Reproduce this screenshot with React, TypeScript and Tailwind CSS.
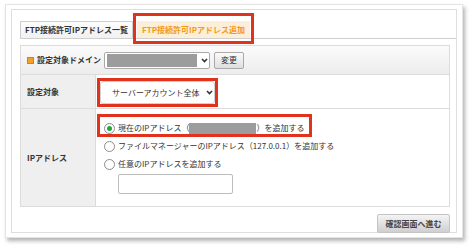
// FTP接続許可IPアドレス追加 画面（注釈の赤枠つき）

function Chevron() {
  return (
    <svg width="7" height="5" viewBox="0 0 7 5" className="shrink-0">
      <path d="M1 1 L3.5 3.5 L6 1" fill="none" stroke="#333" strokeWidth="1.6" />
    </svg>
  );
}

function Radio({ checked }: { checked?: boolean }) {
  return (
    <span className="w-[11px] h-[11px] rounded-full border border-[#8c8c8c] bg-white flex items-center justify-center shrink-0">
      {checked && <span className="w-[5px] h-[5px] rounded-full bg-[#22a63c]" />}
    </span>
  );
}

export default function App() {
  return (
    <div
      className="w-[474px] h-[245px] bg-white overflow-hidden pl-[5px] pt-[4px] text-[8px] leading-[10px] text-[#333]"
      style={{ fontFamily: "'Noto Sans CJK JP', 'Noto Sans', sans-serif" }}
    >
      {/* 紙っぽい外枠 */}
      <div className="w-[458px] h-[234px] bg-white border border-[#e4e4e4] shadow-[2px_3px_4px_rgba(0,0,0,0.3)] pl-[5px] pt-[4px]">
        <div className="w-[446px] h-[224px] border border-[#dedede] pl-[8px] pt-[11px]">
          {/* タブ */}
          <div className="flex items-end border-b border-[#cfcfcf] h-[18px]">
            <div className="w-[113px] h-[17px] border-t border-l border-r border-[#cfcfcf] bg-gradient-to-b from-[#fdfdfd] to-[#f1f1f1] flex items-center justify-center font-bold">
              FTP接続許可IPアドレス一覧
            </div>
            <div className="relative ml-[4px] w-[113px] h-[17px] bg-[#fdeed8] flex items-center justify-center font-bold text-[#f29a1a]">
              FTP接続許可IPアドレス追加
              <span className="absolute -left-[4px] -top-[8px] -right-[4px] -bottom-[6px] border-[3px] border-[#e1321d]" />
            </div>
          </div>

          {/* 設定テーブル */}
          <div className="mt-[6px] w-[430px] border border-[#dcdcdc]">
            <div className="h-[29px] flex items-center pl-[6px] bg-gradient-to-b from-[#fbfbfb] to-[#ededed] border-b border-[#dcdcdc]">
              <span className="w-[7px] h-[7px] bg-[#f5a02a] border border-[#d98212]" />
              <span className="ml-[3px] font-bold">設定対象ドメイン</span>
              <div className="ml-[3px] w-[106px] h-[17px] border border-[#a9a9a9] rounded-[2px] bg-white flex items-center pl-[2px]">
                <span className="w-[90px] h-[13px] bg-[#9c9c9c]" />
                <span className="ml-[4px]">
                  <Chevron />
                </span>
              </div>
              <div className="ml-[4px] w-[30px] h-[17px] border border-[#a9a9a9] rounded-[2px] bg-gradient-to-b from-[#fbfbfb] to-[#dedede] flex items-center justify-center">
                変更
              </div>
            </div>

            <div className="h-[34px] flex border-b border-[#dcdcdc]">
              <div className="w-[75px] bg-[#efefef] border-r border-[#dcdcdc] flex items-center pl-[6px] font-bold">
                設定対象
              </div>
              <div className="flex items-center pl-[4px] pt-[2px]">
                <div className="relative w-[115px] h-[23px] bg-white border border-[#d0d0d0] rounded-[3px] flex items-center pl-[11px]">
                  <span>サーバーアカウント全体</span>
                  <span className="ml-[6px]">
                    <Chevron />
                  </span>
                  <span className="absolute -left-[4px] -top-[4px] -right-[4px] -bottom-[4px] border-[3px] border-[#e1321d]" />
                </div>
              </div>
            </div>

            <div className="h-[97px] flex">
              <div className="w-[75px] bg-[#efefef] border-r border-[#dcdcdc] flex items-center pl-[6px] font-bold">
                IPアドレス
              </div>
              <div className="pl-[8px] pt-[10px] flex flex-col">
                <div className="relative w-fit h-[18px] flex items-center">
                  <Radio checked />
                  <span className="ml-[3px]">現在のIPアドレス（</span>
                  <span className="w-[67px] h-[11px] bg-[#9c9c9c]" />
                  <span>）を追加する</span>
                  <span className="absolute -left-[7px] -top-[5px] -right-[8px] bottom-0 border-[3px] border-[#e1321d]" />
                </div>
                <div className="h-[18px] flex items-center">
                  <Radio />
                  <span className="ml-[3px]">ファイルマネージャーのIPアドレス（127.0.0.1）を追加する</span>
                </div>
                <div className="h-[18px] flex items-center">
                  <Radio />
                  <span className="ml-[3px]">任意のIPアドレスを追加する</span>
                </div>
                <div className="ml-[14px] mt-[1px] w-[115px] h-[20px] border border-[#bdbdbd] rounded-[2px] bg-white" />
              </div>
            </div>
          </div>

          {/* 確認ボタン */}
          <div className="w-[430px] flex justify-end mt-[7px]">
            <div className="w-[73px] h-[19px] border border-[#c4c4c4] rounded-[2px] bg-gradient-to-b from-[#f4f4f4] to-[#cfcfcf] flex items-center justify-center font-bold text-[#444]">
              確認画面へ進む
            </div>
          </div>
        </div>
      </div>
    </div>
  );
}
